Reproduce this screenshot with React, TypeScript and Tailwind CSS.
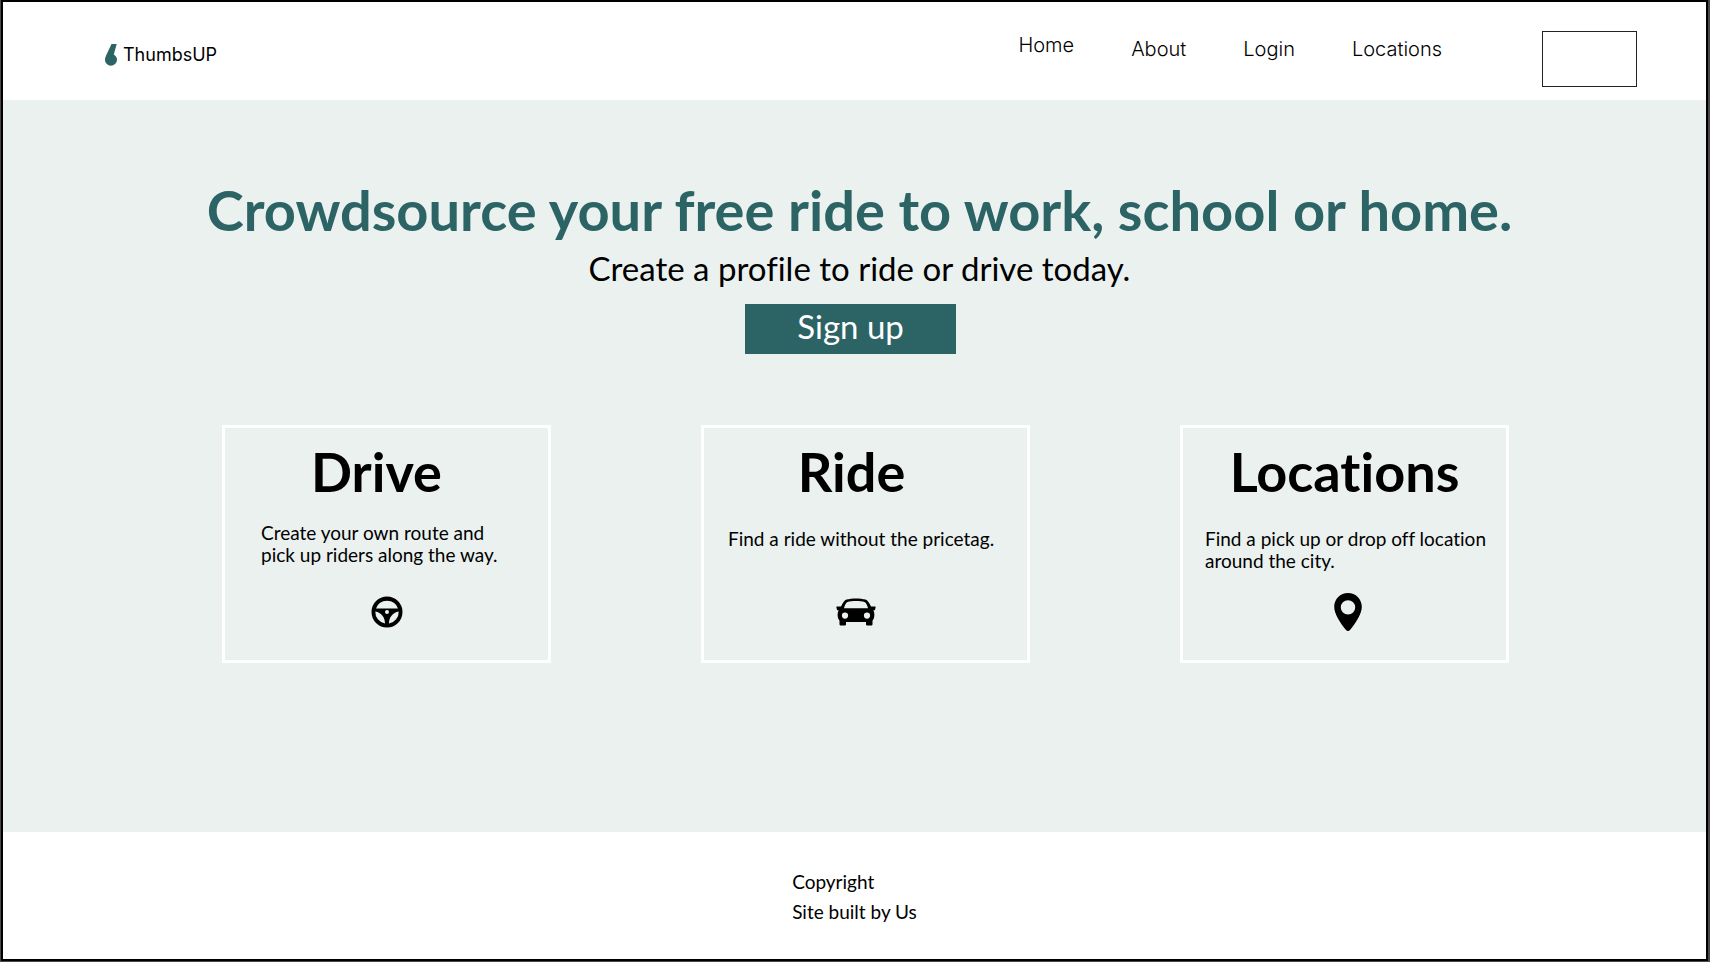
import type { ReactNode } from "react";

type Card = {
  title: string;
  text: string;
  titleClass: string;
  textClass: string;
  iconClass: string;
  icon: ReactNode;
};

function LogoMark() {
  return (
    <svg width="12" height="22" viewBox="0 0 12 22" aria-hidden="true">
      <path
        fill="#2c6466"
        d="M6.5 0h5.2L8.8 10.4A6 6 0 1 1 .3 13.7C.6 12.6 1.2 11.3 1.8 10Z"
      />
    </svg>
  );
}

function SteeringWheelIcon() {
  return (
    <svg width="32" height="32" viewBox="0 0 32 32" aria-hidden="true">
      <path
        fillRule="evenodd"
        d="M16 .5a15.5 15.5 0 1 1 0 31a15.5 15.5 0 0 1 0-31ZM5 12.5h22A11.7 11.7 0 0 0 5 12.5ZM4.3 15.5A11.8 11.8 0 0 0 14 27.6C14 21.5 10.5 16.5 4.3 15.5ZM27.7 15.5C21.5 16.5 18 21.5 18 27.6A11.8 11.8 0 0 0 27.7 15.5ZM16 14a2 2 0 1 0 0 4a2 2 0 0 0 0-4Z"
      />
    </svg>
  );
}

function CarIcon() {
  return (
    <svg width="40" height="28" viewBox="0 0 40 28" aria-hidden="true">
      <path
        fillRule="evenodd"
        d="M5 8.6C7 4.5 8.5 2.3 10.5 1.5C15.5 0 24.5 0 29.5 1.5C31.5 2.3 33 4.5 35 8.6H39C39.7 8.6 39.7 9.2 39.5 10L38.8 12.3H37.3C38.5 14.5 38.8 17.5 37.8 20.5L36.5 22.8V26C36.5 27 36 27.5 35 27.5H31.5C30.5 27.5 30 27 30 26V24H10V26C10 27 9.5 27.5 8.5 27.5H5C4 27.5 3.5 27 3.5 26V22.8L2.2 20.5C1.2 17.5 1.5 14.5 2.7 12.3H1.2L.5 10C.3 9.2 .3 8.6 1 8.6ZM8 10.2H32C31 6.5 30 4.7 28.5 4.1C24 2.7 16 2.7 11.5 4.1C10 4.7 9 6.5 8 10.2ZM9 14.5a3.1 3.1 0 1 0 0 6.2a3.1 3.1 0 0 0 0-6.2ZM31 14.5a3.1 3.1 0 1 0 0 6.2a3.1 3.1 0 0 0 0-6.2Z"
      />
    </svg>
  );
}

function PinIcon() {
  return (
    <svg width="28" height="38" viewBox="0 0 28 38" aria-hidden="true">
      <path
        fillRule="evenodd"
        d="M14 0C21.7 0 27.8 6.1 27.8 13.8C27.8 21 21.5 30.5 16.2 36.8C14.9 38.4 13.1 38.4 11.8 36.8C6.5 30.5 .2 21 .2 13.8C.2 6.1 6.3 0 14 0ZM14 7.2a7.2 7.2 0 1 0 0 14.4a7.2 7.2 0 0 0 0-14.4Z"
      />
    </svg>
  );
}

const cards: Card[] = [
  {
    title: "Drive",
    text: "Create your own route and pick up riders along the way.",
    titleClass: "pr-5",
    textClass: "mt-5 pl-9 pr-8",
    iconClass: "",
    icon: <SteeringWheelIcon />,
  },
  {
    title: "Ride",
    text: "Find a ride without the pricetag.",
    titleClass: "pr-7",
    textClass: "mt-[26px] pl-6",
    iconClass: "pr-5",
    icon: <CarIcon />,
  },
  {
    title: "Locations",
    text: "Find a pick up or drop off location around the city.",
    titleClass: "",
    textClass: "mt-[26px] pl-[22px]",
    iconClass: "pl-1.5",
    icon: <PinIcon />,
  },
];

export default function App() {
  return (
    <div className="flex min-h-screen bg-[#4b4747] pb-px pl-px pr-0.5 font-['Lato',sans-serif] text-black [font-variant-ligatures:none]">
      <div className="flex flex-1 flex-col border-2 border-black bg-white">
        {/* Header */}
        <header className="flex h-[98px] items-center justify-between pl-[102px] pr-[69px] font-['Inter',sans-serif] text-lg">
          <a href="#" className="flex items-center gap-1.5 pt-2">
            <LogoMark />
            <span>ThumbsUP</span>
          </a>

          <div className="flex items-center">
            <nav className="mr-[100px] flex items-center gap-[57px] pb-1 text-xl font-light">
              <a href="#home" className="pb-2">
                Home
              </a>
              <a href="#about">About</a>
              <a href="#login">Login</a>
              <a href="#locations">Locations</a>
            </nav>
            <button
              type="button"
              aria-label="Account"
              className="mt-4 h-14 w-[95px] border border-[#222222]"
            />
          </div>
        </header>

        <main className="flex-1 bg-[#ebf1ef]">
          {/* Hero */}
          <section className="flex flex-col items-center pl-[10px] pt-[78px] text-center">
            <h1 className="text-[56px] leading-[64px] font-bold text-[#2c6466]">
              Crowdsource your free ride to work, school or home.
            </h1>
            <p className="mt-1.5 text-[33px] leading-[40px]">
              Create a profile to ride or drive today.
            </p>
            <button
              type="button"
              className="mr-[18px] mt-4 h-[50px] w-[211px] bg-[#2c6466] pb-1.5 text-[33px] leading-[40px] text-white"
            >
              Sign up
            </button>
          </section>

          {/* Cards */}
          <section className="mt-[71px] grid grid-cols-3 gap-[150px] pl-[219px] pr-[197px]">
            {cards.map((card) => (
              <article
                key={card.title}
                className="flex min-h-[238px] flex-col border-3 border-white pb-7 pt-[14px]"
              >
                <h2
                  className={`text-center text-[54px] leading-[60px] font-bold ${card.titleClass}`}
                >
                  {card.title}
                </h2>
                <p className={`text-[19px] leading-[22px] ${card.textClass}`}>
                  {card.text}
                </p>
                <div
                  className={`mt-auto flex h-10 items-center justify-center ${card.iconClass}`}
                >
                  {card.icon}
                </div>
              </article>
            ))}
          </section>
        </main>

        {/* Footer */}
        <footer className="flex h-[127px] flex-col items-center justify-center pt-0.5 text-[19px] leading-[30px]">
          <div>
            <p>Copyright</p>
            <p>Site built by Us</p>
          </div>
        </footer>
      </div>
    </div>
  );
}
